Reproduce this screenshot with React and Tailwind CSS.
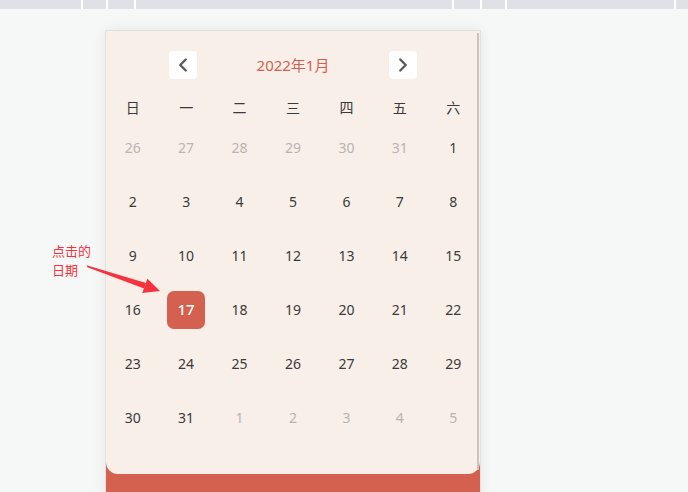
import { ChevronLeft, ChevronRight } from 'lucide-react';

const WEEK = ['日', '一', '二', '三', '四', '五', '六'];

function buildDays() {
  const days = [];
  for (let d = 26; d <= 31; d++) days.push({ n: d, other: true });
  for (let d = 1; d <= 31; d++) days.push({ n: d, other: false });
  for (let d = 1; d <= 5; d++) days.push({ n: d, other: true });
  return days;
}

export default function App() {
  const days = buildDays();
  const selected = 17;

  return (
    <div
      className="relative w-[688px] h-[492px] overflow-hidden bg-[#f6f8f7]"
      style={{ fontFamily: '"Noto Sans", "Noto Sans CJK SC", sans-serif' }}
    >
      {/* top strip */}
      <div className="flex h-[9px] bg-[#dfe1e6]">
        <div className="w-[81px]" />
        <div className="w-[25px] border-l-2 border-white" />
        <div className="w-[28px] border-l-2 border-white" />
        <div className="w-[318px] border-l-2 border-white" />
        <div className="w-[28px] border-l-2 border-white" />
        <div className="w-[25px] border-l-2 border-white" />
        <div className="w-[169px] border-l-2 border-white" />
        <div className="flex-1 border-l-2 border-white" />
      </div>

      {/* calendar card */}
      <div className="relative ml-[105px] mt-[21px] w-[376px] h-[500px] border border-[#e3e1df] bg-[#d4604f] shadow-[0_0_12px_rgba(0,0,0,0.07)]">
        <div className="h-[443px] rounded-b-[12px] bg-[#f8efe9] pt-[20px]">
          <div className="flex items-center justify-between px-[63px]">
            <button className="flex h-[28px] w-[28px] items-center justify-center rounded-[4px] bg-white text-[#5a5a5a]">
              <ChevronLeft size={22} strokeWidth={2.6} />
            </button>
            <span className="text-[15px] text-[#d4604f]">2022年1月</span>
            <button className="flex h-[28px] w-[28px] items-center justify-center rounded-[4px] bg-white text-[#5a5a5a]">
              <ChevronRight size={22} strokeWidth={2.6} />
            </button>
          </div>

          <div className="mt-[14px] grid grid-cols-7">
            {WEEK.map(w => (
              <div key={w} className="flex h-[28px] items-center justify-center text-[14px] text-[#3a3a3a]">
                {w}
              </div>
            ))}
          </div>

          <div className="grid grid-cols-7">
            {days.map((d, i) => (
              <div key={i} className="flex h-[54px] items-center justify-center pb-[1px]">
                {!d.other && d.n === selected ? (
                  <span className="flex h-[38px] w-[38px] items-center justify-center rounded-[7px] bg-[#d4604f] text-[15px] font-medium text-white">
                    {d.n}
                  </span>
                ) : (
                  <span className={`text-[14px] ${d.other ? 'text-[#b9b4b0]' : 'text-[#3a3a3a]'}`}>{d.n}</span>
                )}
              </div>
            ))}
          </div>
        </div>

        {/* scrollbar */}
        <div className="absolute right-[1px] top-[2px] h-[437px] w-[2px] bg-[#cbc3bd]" />
      </div>

      {/* annotation */}
      <div className="absolute left-[52px] top-[242px] text-[13px] leading-[19px] text-[#f5333f]">
        <div>点击的</div>
        <div>日期</div>
      </div>
      <svg className="absolute left-[80px] top-[260px]" width="90" height="40" viewBox="80 260 90 40">
        <polygon points="86.6,265.3 87.4,267.2 144.0,288.6 146.0,283.0" fill="#f5333f" />
        <polygon points="160,291 142.2,293 147.4,278.8" fill="#f5333f" />
      </svg>
    </div>
  );
}
